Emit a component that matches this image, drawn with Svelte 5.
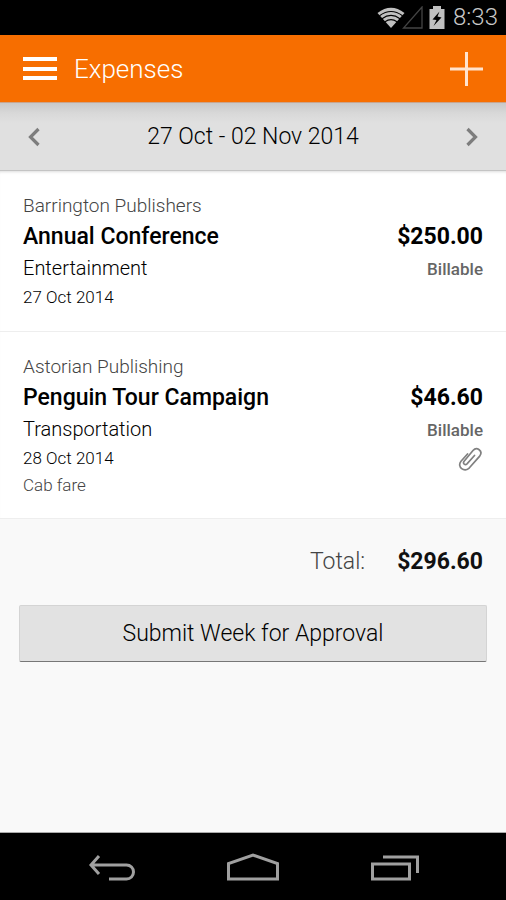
<script lang="ts">
  interface Expense {
    client: string
    project: string
    category: string
    date: string
    note?: string
    amount: number
    billable: boolean
    receipt: boolean
  }

  const week = '27 Oct - 02 Nov 2014'

  const expenses: Expense[] = [
    {
      client: 'Barrington Publishers',
      project: 'Annual Conference',
      category: 'Entertainment',
      date: '27 Oct 2014',
      amount: 250,
      billable: true,
      receipt: false
    },
    {
      client: 'Astorian Publishing',
      project: 'Penguin Tour Campaign',
      category: 'Transportation',
      date: '28 Oct 2014',
      note: 'Cab fare',
      amount: 46.6,
      billable: true,
      receipt: true
    }
  ]

  const total = expenses.reduce((sum, e) => sum + e.amount, 0)

  const money = (n: number) => '$' + n.toFixed(2)
</script>

<div class="screen">
  <div class="status-bar">
    <svg class="wifi" width="28" height="22" viewBox="0 0 28 22" aria-hidden="true">
      <path d="M14 21L.5 6Q14-4.500 27.500 6Z" fill="#c0c0c0" />
      <path d="M2.500 8.700Q14 .2 25.500 8.700M5 11.700Q14 5 23 11.700M8 14.700Q14 10.500 20 14.700" fill="none" stroke="#000" stroke-width="1.100" />
    </svg>
    <svg width="21" height="24" viewBox="0 0 21 24" fill="none" stroke="#444" stroke-width="1.300" aria-hidden="true">
      <path d="M20 1V22H1.500Z" />
    </svg>
    <svg class="battery" width="16" height="23" viewBox="0 0 16 23" aria-hidden="true">
      <path d="M4 0h8v3h3.500v20H.5V3H4z" fill="#c0c0c0" />
      <path d="M10.500 5.500L3.500 13.500l4 .5-3 6 8-8.500-4-1z" fill="#000" />
    </svg>
    <span class="clock">8:33</span>
  </div>

  <header class="app-bar">
    <button type="button" class="icon-btn" aria-label="Menu">
      <svg width="34" height="24" viewBox="0 0 34 24" fill="#fff">
        <path d="M0 0h34v4H0zM0 10h34v4H0zM0 19h34v4H0z" />
      </svg>
    </button>
    <h1>Expenses</h1>
    <button type="button" class="icon-btn" aria-label="Add expense">
      <svg width="33" height="34" viewBox="0 0 33 34" fill="none" stroke="#ffe3cf" stroke-width="3">
        <path d="M16.500 0v34M0 17h33" />
      </svg>
    </button>
  </header>

  <nav class="week" aria-label="Week">
    <button type="button" class="icon-btn" aria-label="Previous week">
      <svg width="22" height="20" viewBox="0 0 22 20" fill="none" stroke="#7d7d7d" stroke-width="3.200">
        <path d="M15.500 2L7.500 10l8 8" />
      </svg>
    </button>
    <span>{week}</span>
    <button type="button" class="icon-btn" aria-label="Next week">
      <svg width="22" height="20" viewBox="0 0 22 20" fill="none" stroke="#7d7d7d" stroke-width="3.200">
        <path d="M6.500 2l8 8-8 8" />
      </svg>
    </button>
  </nav>

  <main>
    <ul class="expenses">
      {#each expenses as expense}
        <li class="expense">
          <div class="details">
            <p class="client">{expense.client}</p>
            <h2>{expense.project}</h2>
            <p class="category">{expense.category}</p>
            <p class="date">{expense.date}</p>
            {#if expense.note}
              <p class="note">{expense.note}</p>
            {/if}
          </div>
          <div class="cost">
            <strong class="amount">{money(expense.amount)}</strong>
            {#if expense.billable}
              <span class="billable">Billable</span>
            {/if}
            {#if expense.receipt}
              <svg width="26" height="26" viewBox="0 0 26 26" fill="none" stroke="#808080" stroke-width="1.700" stroke-linecap="round" role="img" aria-label="Receipt attached">
                <path d="M17.500 9.500L10 17.800c-1.900 1.800-4.600-.3-2.900-2.600L16 4.500c3.700-4.300 10.500.3 6.700 5.600L12.400 21.800C7.500 27-.5 21 4 15.300L10.500 8" />
              </svg>
            {/if}
          </div>
        </li>
      {/each}
    </ul>

    <div class="total">
      <span>Total:</span>
      <strong class="amount">{money(total)}</strong>
    </div>

    <button type="button" class="submit">Submit Week for Approval</button>
  </main>

  <nav class="system-bar" aria-label="System">
    <button type="button" class="icon-btn" aria-label="Back">
      <svg width="48" height="28" viewBox="0 0 48 28" fill="none" stroke="#a0a0a0" stroke-width="3">
        <path d="M12 3L4 12l8 9M4 12h35.500c4 0 7 3 7 7s-3 7-7 7H22" />
      </svg>
    </button>
    <button type="button" class="icon-btn" aria-label="Home">
      <svg width="52" height="28" viewBox="0 0 52 28" fill="none" stroke="#a0a0a0" stroke-width="3">
        <path d="M1.500 26V10.500L26 2l24.500 8.500V26z" />
      </svg>
    </button>
    <button type="button" class="icon-btn" aria-label="Recent apps">
      <svg width="48" height="28" viewBox="0 0 48 28" fill="none" stroke="#a0a0a0" stroke-width="3">
        <path d="M1.500 11h37v15h-37zM12 4h34.500v16" />
      </svg>
    </button>
  </nav>
</div>

<style>
  :global(body) {
    margin: 0;
    background: #f9f9f9;
  }

  .screen {
    display: flex;
    flex-direction: column;
    min-height: 100vh;
    font-family: Roboto, sans-serif;
    font-weight: 300;
    color: #000;
  }

  h1,
  h2,
  p,
  ul {
    margin: 0;
    padding: 0;
  }

  .icon-btn {
    display: flex;
    padding: 0;
    border: none;
    background: none;
    cursor: pointer;
  }

  .status-bar {
    display: flex;
    align-items: center;
    justify-content: flex-end;
    height: 35px;
    padding-right: 8px;
    background: #000;
  }

  .wifi {
    margin-right: -3px;
  }

  .battery {
    margin: 0 8px 0 6px;
  }

  .clock {
    font-size: 24px;
    line-height: 35px;
    color: #c8c8c8;
  }

  .app-bar {
    display: flex;
    align-items: center;
    height: 67px;
    padding: 0 23px;
    border-bottom: 1px solid #c9a48c;
    background: #f76e00;
  }

  h1 {
    flex: 1;
    margin-left: 17px;
    font-size: 26px;
    font-weight: 300;
    color: #fff;
  }

  .week {
    display: flex;
    align-items: center;
    justify-content: space-between;
    height: 67px;
    padding: 0 23px;
    border-bottom: 1px solid #c4c4c4;
    background: linear-gradient(#c8c8c8, #d8d8d8 10px, #e0e0e0 20px);
    font-size: 23px;
    line-height: 32px;
  }

  main {
    flex: 1;
  }

  .expenses {
    list-style: none;
    box-shadow: inset 0 3px 3px -2px #ddd;
    background: #fff;
  }

  .expense {
    display: flex;
    justify-content: space-between;
    padding: 20px 23px;
    border-bottom: 1px solid #eee;
  }

  .client {
    font-size: 19px;
    line-height: 30px;
    color: #444;
  }

  h2 {
    font-size: 23px;
    line-height: 32px;
    font-weight: 500;
  }

  .category {
    font-size: 20px;
    line-height: 30px;
  }

  .date {
    font-size: 17px;
    line-height: 28px;
  }

  .note {
    font-size: 17px;
    line-height: 26px;
    color: #444;
  }

  .cost {
    display: flex;
    flex-direction: column;
    align-items: flex-end;
    padding-top: 30px;
  }

  .amount {
    font-size: 23px;
    line-height: 32px;
    font-weight: 700;
  }

  .billable {
    font-size: 17px;
    line-height: 32px;
    font-weight: 500;
    color: #666;
  }

  .total {
    display: flex;
    justify-content: flex-end;
    gap: 32px;
    padding: 27px 23px;
    font-size: 23px;
    line-height: 32px;
    color: #111;
  }

  .total span {
    color: #444;
  }

  .submit {
    display: block;
    width: calc(100% - 38px);
    height: 57px;
    margin: 0 19px 24px;
    border: 1px solid #d4d4d4;
    border-bottom-color: #777;
    border-radius: 2px;
    background: #e2e2e2;
    font-family: inherit;
    font-size: 23px;
    font-weight: 300;
    color: #000;
    cursor: pointer;
  }

  .system-bar {
    display: flex;
    align-items: center;
    justify-content: center;
    gap: 92px;
    height: 67px;
    border-top: 1px solid #aaa;
    background: #000;
  }
</style>
